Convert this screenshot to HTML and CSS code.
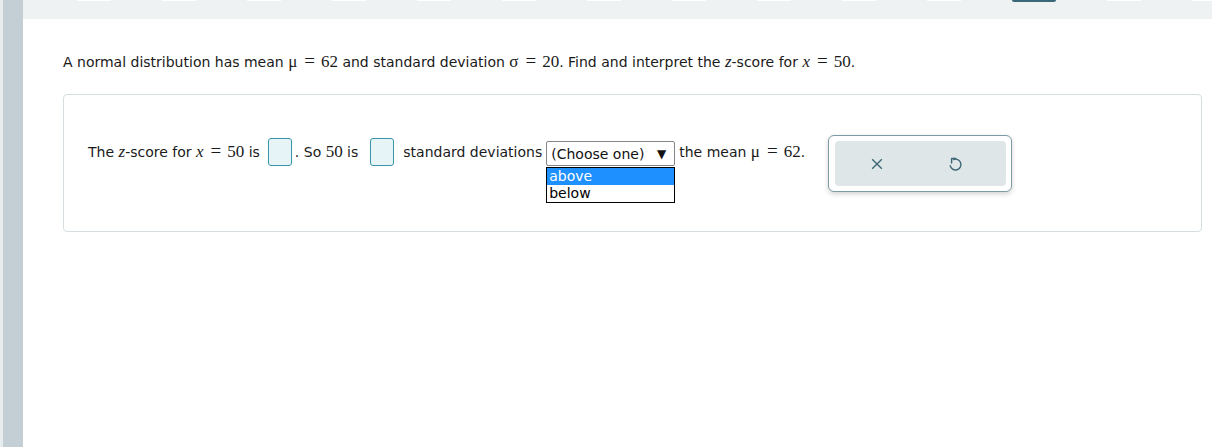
FILE: index.html
```html
<!DOCTYPE html>
<html>
<head>
<meta charset="utf-8">
<link rel="stylesheet" href="styles.css">
</head>
<body>
<div class="page">
  <div class="strip"></div>
  <div class="main">
    <div class="topbar">
      <span class="seg"></span><span class="seg"></span><span class="seg"></span><span class="seg"></span><span class="seg"></span><span class="seg"></span><span class="seg"></span><span class="seg"></span><span class="seg"></span><span class="seg"></span><span class="seg"></span><span class="seg dark"></span><span class="seg"></span><span class="seg"></span>
    </div>
    <div class="content">
      <p class="question">A normal distribution has mean <span class="m">μ<span class="op">=</span>62</span> and standard deviation <span class="m">σ<span class="op">=</span>20</span>. Find and interpret the <span class="m i">z</span>-score for <span class="m"><span class="i">x</span><span class="op">=</span>50</span>.</p>
      <div class="card">
        <div class="row">
          <div class="sentence">
            <span class="t">The <span class="m i">z</span>-score for <span class="m"><span class="i">x</span><span class="op">=</span>50</span> is</span>
            <span class="box"></span>
            <span class="t">. So <span class="m">50</span> is</span>
            <span class="box box2"></span>
            <span class="t">standard deviations</span>
            <span class="selectwrap">
              <span class="select"><span>(Choose one)</span><span class="arrow">▼</span></span>
              <span class="list">
                <span class="opt on">above</span>
                <span class="opt">below</span>
              </span>
            </span>
            <span class="t">the mean <span class="m">μ<span class="op">=</span>62</span>.</span>
          </div>
          <div class="tools">
            <div class="tools-in">
              <svg width="16" height="16" viewBox="0 0 16 16"><path d="M3.2 3.2 L12.8 12.8 M12.8 3.2 L3.2 12.8" stroke="#3e6776" stroke-width="1.4" fill="none"/></svg>
              <svg width="18" height="20" viewBox="0 0 18 20"><path d="M7.4 5.6 A5.4 5.4 0 1 1 4.2 11.6" stroke="#3e6776" stroke-width="1.4" fill="none" stroke-linecap="round"/><path d="M5.6 9 L5.6 4.4 L9.8 4.4" stroke="#3e6776" stroke-width="1.4" fill="none" stroke-linecap="round" stroke-linejoin="round"/></svg>
            </div>
          </div>
        </div>
      </div>
    </div>
  </div>
</div>
</body>
</html>
```

FILE: styles.css
```css
html, body {
  margin: 0;
  padding: 0;
  background: #ffffff;
}
body {
  font-family: "DejaVu Sans", Verdana, sans-serif;
  font-size: 14px;
  color: #1a1a1a;
}
.page {
  display: flex;
  height: 447px;
  overflow: hidden;
}
.strip {
  width: 20px;
  flex: none;
  background: #c3cfd5;
  border-left: 3px solid #e8eced;
}
.main {
  flex: 1;
  min-width: 0;
  display: flex;
  flex-direction: column;
}
.topbar {
  height: 19px;
  background: #eef2f3;
  display: flex;
  align-items: flex-start;
  gap: 51px;
  padding-left: 54px;
  overflow: hidden;
}
.seg {
  width: 34px;
  height: 1px;
  background: #ffffff;
  flex: none;
}
.seg.dark {
  width: 44px;
  height: 2px;
  background: #3b6878;
  border-radius: 0 0 2px 2px;
}
.content {
  padding: 0 10px 0 40px;
}
.question {
  margin: 34px 0 0 0;
  line-height: 18px;
  white-space: nowrap;
}
.m {
  font-family: "Liberation Serif", "Times New Roman", serif;
  font-size: 17px;
}
.i {
  font-style: italic;
}
.op {
  font-size: 19px;
  line-height: 1px;
  margin: 0 6px 0 7px;
}
.card {
  margin-top: 23px;
  border: 1px solid #d6dee1;
  border-radius: 4px;
  height: 138px;
  padding: 40px 0 0 24px;
  box-sizing: border-box;
}
.row {
  display: flex;
  align-items: flex-start;
}
.sentence {
  display: flex;
  align-items: center;
  height: 30px;
  margin-top: 2px;
}
.t {
  white-space: pre;
}
.box {
  width: 22px;
  height: 26px;
  border: 1px solid #3a95a8;
  border-radius: 3px;
  background: #e6f4f8;
  margin: 0 3px 0 8px;
}
.box2 {
  margin: 0 9px 0 12px;
}
.selectwrap {
  position: relative;
  margin: 0 4px 0 4px;
}
.select {
  display: flex;
  justify-content: space-between;
  align-items: center;
  border: 1px solid #858585;
  border-radius: 2px;
  padding: 0 8px 0 4px;
  box-sizing: border-box;
  width: 129px;
  height: 25px;
  margin-top: 3px;
  color: #111;
}
.arrow {
  font-size: 12px;
}
.list {
  position: absolute;
  left: 0;
  top: 29px;
  width: 129px;
  border: 1px solid #000;
  box-sizing: border-box;
  background: #fff;
  display: flex;
  flex-direction: column;
}
.opt {
  height: 17px;
  line-height: 17px;
  padding-left: 2px;
  color: #000;
}
.opt.on {
  background: #1e90ff;
  color: #fff;
}
.tools {
  margin-left: 23px;
  width: 184px;
  height: 57px;
  border: 1px solid #7d9ba4;
  border-radius: 6px;
  box-sizing: border-box;
  padding: 5px 5px 5px 6px;
  background: #fff;
  box-shadow: 0 2px 5px rgba(0, 0, 0, 0.18);
}
.tools-in {
  height: 100%;
  background: #dfe6e8;
  border-radius: 4px;
  display: flex;
  align-items: center;
  justify-content: space-around;
  padding: 0 12px 0 4px;
}
```
